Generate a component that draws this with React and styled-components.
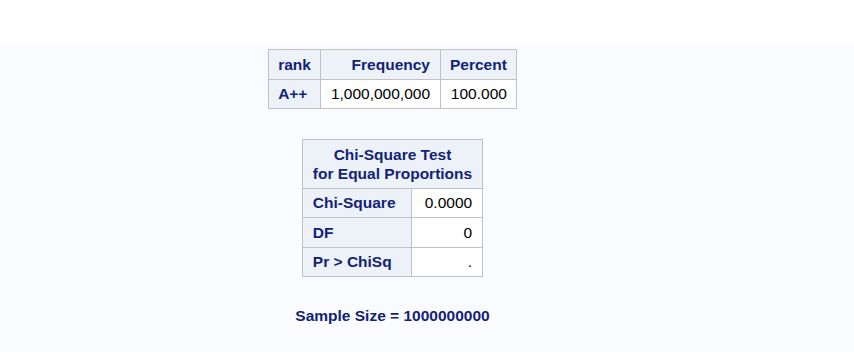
import React from "react";
import styled, { createGlobalStyle } from "styled-components";

const GlobalStyle = createGlobalStyle`
  html, body {
    margin: 0;
    padding: 0;
    background: #ffffff;
  }
  body {
    font-family: Arial, "Liberation Sans", sans-serif;
  }
`;

const Page = styled.div`
  margin-top: 44px;
  background: #fafbfe;
  min-height: 308px;
  width: 854px;
`;

const Body = styled.div`
  width: 785px;
  display: flex;
  flex-direction: column;
  align-items: center;
  padding-top: 5px;
`;

const Table = styled.table`
  border-collapse: collapse;
  border: 1px solid #c1c1c1;
  margin-bottom: ${(p) => p.$gap || 0}px;
  font-size: 15.5px;
  line-height: 19px;
`;

const Cell = styled.td`
  border: 1px solid #c1c1c1;
  padding: 4.75px 9.5px;
  text-align: ${(p) => p.$align || "right"};
  white-space: nowrap;
  color: #000000;
  background: #ffffff;
`;

const Head = styled.th`
  border: 1px solid #c1c1c1;
  padding: 4.75px 9.5px;
  text-align: ${(p) => p.$align || "left"};
  white-space: nowrap;
  color: #112277;
  background: #edf2f9;
  font-weight: bold;
`;

const Note = styled.p`
  margin: 0;
  color: #112277;
  font-size: 15.5px;
  font-weight: bold;
`;

export default function App() {
  return (
    <>
      <GlobalStyle />
      <Page>
        <Body>
          <Table $gap={30}>
            <thead>
              <tr>
                <Head>rank</Head>
                <Head $align="right">Frequency</Head>
                <Head $align="right">Percent</Head>
              </tr>
            </thead>
            <tbody>
              <tr>
                <Head>A++</Head>
                <Cell>1,000,000,000</Cell>
                <Cell>100.000</Cell>
              </tr>
            </tbody>
          </Table>

          <Table $gap={30}>
            <thead>
              <tr>
                <Head colSpan={2} $align="center">
                  Chi-Square Test
                  <br />
                  for Equal Proportions
                </Head>
              </tr>
            </thead>
            <tbody>
              <tr>
                <Head>Chi-Square</Head>
                <Cell>0.0000</Cell>
              </tr>
              <tr>
                <Head>DF</Head>
                <Cell>0</Cell>
              </tr>
              <tr>
                <Head>Pr &gt; ChiSq</Head>
                <Cell>.</Cell>
              </tr>
            </tbody>
          </Table>

          <Note>Sample Size = 1000000000</Note>
        </Body>
      </Page>
    </>
  );
}
